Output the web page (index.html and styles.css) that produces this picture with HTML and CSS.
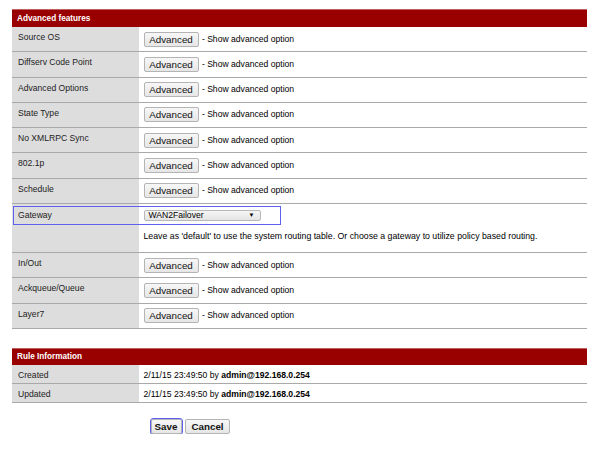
FILE: index.html
```html
<!DOCTYPE html>
<html>
<head>
<meta charset="utf-8">
<link rel="stylesheet" href="styles.css">
</head>
<body>
<div class="page">
  <table class="tbl">
    <colgroup><col class="c1"><col class="c2"></colgroup>
    <tr><td class="topic" colspan="2">Advanced features</td></tr>
    <tr><td class="lbl">Source OS</td><td class="val"><span class="btn">Advanced</span> - Show advanced option</td></tr>
    <tr><td class="lbl">Diffserv Code Point</td><td class="val"><span class="btn">Advanced</span> - Show advanced option</td></tr>
    <tr><td class="lbl">Advanced Options</td><td class="val"><span class="btn">Advanced</span> - Show advanced option</td></tr>
    <tr><td class="lbl">State Type</td><td class="val"><span class="btn">Advanced</span> - Show advanced option</td></tr>
    <tr><td class="lbl">No XMLRPC Sync</td><td class="val"><span class="btn">Advanced</span> - Show advanced option</td></tr>
    <tr><td class="lbl">802.1p</td><td class="val"><span class="btn">Advanced</span> - Show advanced option</td></tr>
    <tr><td class="lbl">Schedule</td><td class="val"><span class="btn">Advanced</span> - Show advanced option</td></tr>
    <tr>
      <td class="lbl gw-lbl">Gateway<div class="focusbox"></div></td>
      <td class="val gw-val">
        <div class="select"><span>WAN2Failover</span><span class="arrow">&#9660;</span></div>
        <div class="help">Leave as 'default' to use the system routing table. Or choose a gateway to utilize policy based routing.</div>
      </td>
    </tr>
    <tr><td class="lbl">In/Out</td><td class="val"><span class="btn">Advanced</span> - Show advanced option</td></tr>
    <tr><td class="lbl">Ackqueue/Queue</td><td class="val"><span class="btn">Advanced</span> - Show advanced option</td></tr>
    <tr><td class="lbl">Layer7</td><td class="val"><span class="btn">Advanced</span> - Show advanced option</td></tr>
  </table>

  <table class="tbl info">
    <colgroup><col class="c1"><col class="c2"></colgroup>
    <tr><td class="topic" colspan="2">Rule Information</td></tr>
    <tr><td class="lbl short">Created</td><td class="val short">2/11/15 23:49:50 by <b>admin@192.168.0.254</b></td></tr>
    <tr><td class="lbl short">Updated</td><td class="val short">2/11/15 23:49:50 by <b>admin@192.168.0.254</b></td></tr>
  </table>

  <div class="actions">
    <span class="fbtn save">Save</span>
    <span class="fbtn cancel">Cancel</span>
  </div>
</div>
</body>
</html>
```
FILE: styles.css
```css
html, body {
  margin: 0;
  padding: 0;
  background: #ffffff;
}
body {
  font-family: "Liberation Sans", Arial, sans-serif;
  font-size: 8.6px;
  color: #000;
}
.page {
  padding: 9px 15px 0 12px;
}
.tbl {
  width: 575px;
  border-collapse: collapse;
  border-spacing: 0;
  table-layout: fixed;
}
.c1 { width: 127px; }
.c2 { width: 448px; }
.tbl td {
  padding: 0;
  line-height: 10px;
}
.topic {
  background: #990000;
  color: #ffffff;
  font-weight: bold;
  font-size: 8.2px;
  height: 17px;
  padding: 0 5px !important;
  vertical-align: middle;
  border-top: 0.5px solid #c06060;
}
.lbl {
  background: #dddddd;
  border-bottom: 1px solid #a9a9a9;
  vertical-align: top;
  padding: 5px 6px 0 6px !important;
  color: #222;
}
.val {
  border-bottom: 1px solid #a9a9a9;
  vertical-align: top;
  padding: 4.5px 4px 4.8px 4.5px !important;
  white-space: nowrap;
  line-height: 15px !important;
}
.btn {
  display: inline-block;
  box-sizing: border-box;
  height: 15px;
  width: 55px;
  line-height: 13px;
  font-size: 9.8px;
  text-align: center;
  border: 1px solid #b4b4b4;
  border-radius: 2px;
  background: linear-gradient(#f7f7f7, #e6e6e6);
  color: #111;
  vertical-align: top;
  margin-right: 1px;
}
.gw-lbl {
  position: relative;
  padding-top: 6px !important;
}
.focusbox {
  position: absolute;
  left: 0.5px;
  top: 1.5px;
  width: 268px;
  height: 19px;
  box-sizing: border-box;
  border: 1.5px solid #5f5ff0;
}
.gw-val {
  padding-top: 6px !important;
  padding-bottom: 11.5px !important;
  line-height: 10px !important;
}
.select {
  box-sizing: border-box;
  width: 117px;
  height: 11px;
  border: 1px solid #b8b8b8;
  border-radius: 2px;
  background: linear-gradient(#f6f6f6, #e4e4e4);
  display: flex;
  justify-content: space-between;
  align-items: center;
  padding: 0 5px 0 4px;
  font-size: 8.6px;
  line-height: 9px;
}
.arrow {
  font-size: 6px;
}
.help {
  margin-top: 9.5px;
  line-height: 10px;
  font-size: 8.75px;
}
.info {
  margin-top: 19px;
}
.info .topic {
  height: 16px;
}
.lbl.short {
  padding: 5px 6px 3px 6px !important;
}
.val.short {
  padding: 5px 4px 3px 4.5px !important;
  vertical-align: top;
  line-height: 10px !important;
}
.actions {
  display: flex;
  gap: 1.5px;
  padding-left: 136.5px;
  margin-top: 16px;
  align-items: center;
}
.fbtn {
  display: inline-block;
  box-sizing: border-box;
  font-weight: bold;
  font-size: 9.8px;
  height: 15px;
  line-height: 13px;
  text-align: center;
  border: 1px solid #b4b4b4;
  border-radius: 2px;
  background: linear-gradient(#f7f7f7, #e6e6e6);
  color: #111;
}
.save {
  width: 31px;
  outline: 1.5px solid #5f5ff0;
  outline-offset: 0.5px;
  margin-left: 2px;
  margin-right: 2px;
}
.cancel {
  width: 45px;
}
```
